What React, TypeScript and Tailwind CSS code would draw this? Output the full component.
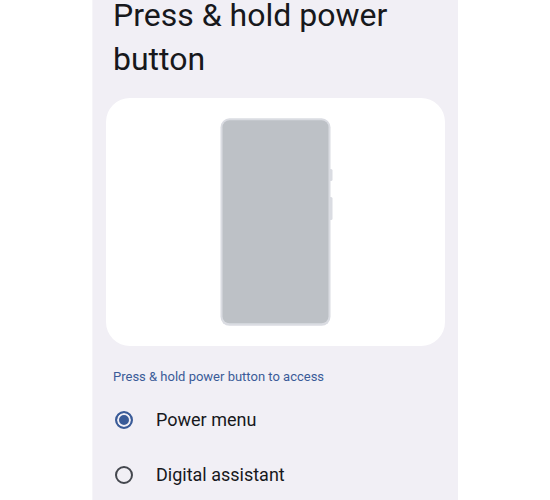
import { useState } from "react";

const options = [
  { id: "power-menu", label: "Power menu" },
  { id: "assistant", label: "Digital assistant" },
];

function PhoneIllustration() {
  return (
    <svg
      className="block h-[208px] w-[114px]"
      viewBox="0 0 114 208"
      role="img"
      aria-label="Phone with side buttons"
    >
      <rect x="108" y="51" width="5.5" height="12" rx="1.5" fill="#dadce2" />
      <rect x="108" y="79" width="5.5" height="23" rx="1.5" fill="#dadce2" />
      <rect x="1.5" y="0.3" width="110" height="207.5" rx="9" fill="#dadce2" />
      <rect x="3.5" y="2.3" width="106" height="203" rx="7" fill="#bdc1c6" />
    </svg>
  );
}

export default function App() {
  const [selected, setSelected] = useState("power-menu");

  return (
    <div className="h-screen overflow-hidden bg-white font-['Roboto',sans-serif]">
      <main className="mx-auto min-h-full w-full max-w-[366px] border-l border-[#f6f5f8] bg-[#f1eff5] px-[13px]">
        <h1 className="-mt-[7px] px-[7px] text-[32px] leading-[44px] text-[#17181c]">
          Press &amp; hold power button
        </h1>
        <div className="mt-[17px] flex justify-center rounded-[24px] bg-white py-5">
          <PhoneIllustration />
        </div>
        <fieldset className="mt-5 px-[7px]">
          <legend className="text-[13px] leading-[22px] text-[#3a5b98]">
            Press &amp; hold power button to access
          </legend>
          <div className="flex flex-col pt-1">
            {options.map((option) => (
              <label
                key={option.id}
                className="flex h-[55px] items-center gap-[23px] text-[18px] leading-6 text-[#17181c]"
              >
                <input
                  type="radio"
                  name="power-action"
                  value={option.id}
                  checked={selected === option.id}
                  onChange={() => setSelected(option.id)}
                  className="ml-0.5 size-[18px] shrink-0 appearance-none rounded-full border-2 border-[#44474e] checked:border-[#3a5b98] checked:bg-[#3a5b98] checked:shadow-[inset_0_0_0_2px_#f1eff5]"
                />
                {option.label}
              </label>
            ))}
          </div>
        </fieldset>
      </main>
    </div>
  );
}
